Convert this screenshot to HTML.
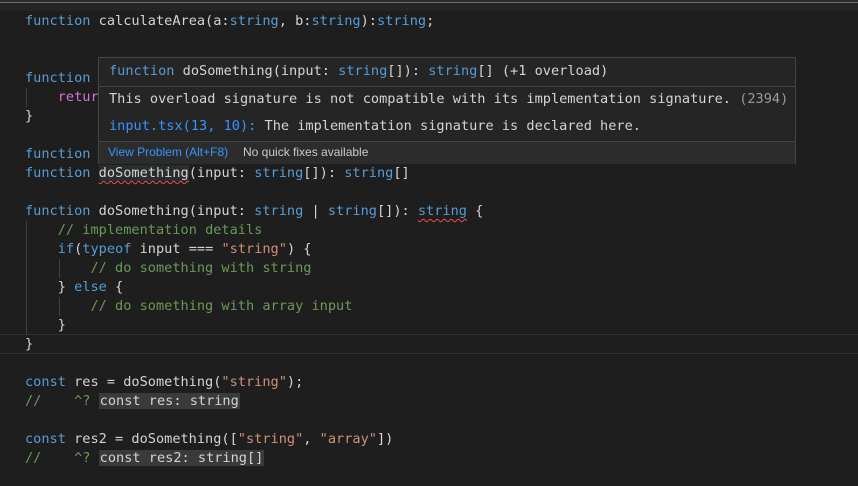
<!DOCTYPE html>
<html><head><style>
body{margin:0;width:858px;height:486px;background:#1e1e1e;overflow:hidden;position:relative;font-family:"DejaVu Sans Mono","Liberation Mono",monospace;font-size:13.6px;color:#d4d4d4}
.l{position:absolute;left:25px;height:19px;line-height:19px;white-space:pre}
.k{color:#569cd6}.s{color:#ce9178}.c{color:#6a9955}.f{color:#dcdcaa}.y{color:#ffd700}.p{color:#da70d6}
.sq{text-decoration:underline wavy #f14c4c;text-decoration-thickness:1px;text-underline-offset:3px}
.g{position:absolute;width:1px;background:#404040}
.in{background:#3a3a3a;color:#d4d4d4;padding:0 1px}
#tip{position:absolute;left:98px;top:57px;width:696px;height:105px;background:#252526;border:1px solid #454545}
#tip .r{position:absolute;left:10px;white-space:pre}
</style></head><body>
<div style="position:absolute;left:0;top:0;width:858px;height:2px;background:#2b2b2b"></div>
<div style="position:absolute;left:0;top:2px;width:858px;height:1px;background:#6e6e6e"></div>
<div style="position:absolute;left:0;top:3px;width:858px;height:8px;background:#252526"></div>
<div style="position:absolute;left:0;top:334px;width:858px;height:18px;border-top:1px solid #303030;border-bottom:1px solid #303030"></div>
<div class="g" style="left:26px;top:88px;height:19px"></div>
<div class="g" style="left:26px;top:221px;height:114px"></div>
<div class="g" style="left:59px;top:259px;height:19px"></div>
<div class="g" style="left:59px;top:297px;height:19px"></div>

<div class="l" style="top:12px"><span class="k">function</span> calculateArea(a:<span class="k">string</span>, b:<span class="k">string</span>):<span class="k">string</span>;</div>
<div class="l" style="top:69px"><span class="k">function</span></div>
<div class="l" style="top:88px">    <span class="p">retur</span></div>
<div class="l" style="top:107px">}</div>
<div class="l" style="top:145px"><span class="k">function</span></div>
<div class="l" style="top:164px"><span class="k">function</span> <span class="sq" style="background:#2a2d2e">doSomething</span>(input: <span class="k">string</span>[]): <span class="k">string</span>[]</div>
<div class="l" style="top:202px"><span class="k">function</span> doSomething(input: <span class="k">string</span> | <span class="k">string</span>[]): <span class="k sq">string</span> {</div>
<div class="l" style="top:221px">    <span class="c">// implementation details</span></div>
<div class="l" style="top:240px">    <span class="k">if</span>(<span class="k">typeof</span> input === <span class="s">"string"</span>) {</div>
<div class="l" style="top:259px">        <span class="c">// do something with string</span></div>
<div class="l" style="top:278px">    } <span class="k">else</span> {</div>
<div class="l" style="top:297px">        <span class="c">// do something with array input</span></div>
<div class="l" style="top:316px">    }</div>
<div class="l" style="top:335px">}</div>
<div class="l" style="top:373px"><span class="k">const</span> res = doSomething(<span class="s">"string"</span>);</div>
<div class="l" style="top:392px"><span class="c">//    ^?</span> <span class="in">const res: string</span></div>
<div class="l" style="top:430px"><span class="k">const</span> res2 = doSomething([<span class="s">"string"</span>, <span class="s">"array"</span>])</div>
<div class="l" style="top:449px"><span class="c">//    ^?</span> <span class="in">const res2: string[]</span></div>

<div id="tip">
<div class="r" style="top:5px"><span class="k">function</span> doSomething(input: <span class="k">string</span>[]): <span class="k">string</span>[] (+1 overload)</div>
<div style="position:absolute;left:0;top:28px;width:696px;height:1px;background:#454545"></div>
<div class="r" style="top:33px">This overload signature is not compatible with its implementation signature. <span style="color:#999">(2394)</span></div>
<div class="r" style="top:60px"><span style="color:#3794ff">input.tsx(13, 10):</span> The implementation signature is declared here.</div>
<div style="position:absolute;left:0;top:83px;width:696px;height:22px;background:#2c2c2d;border-top:1px solid #454545;font-family:'Liberation Sans',sans-serif;font-size:12px;line-height:21px">
<span style="position:absolute;left:9px;color:#3794ff">View Problem (Alt+F8)</span>
<span style="position:absolute;left:144px;color:#ccc">No quick fixes available</span></div>
</div>
</body></html>
